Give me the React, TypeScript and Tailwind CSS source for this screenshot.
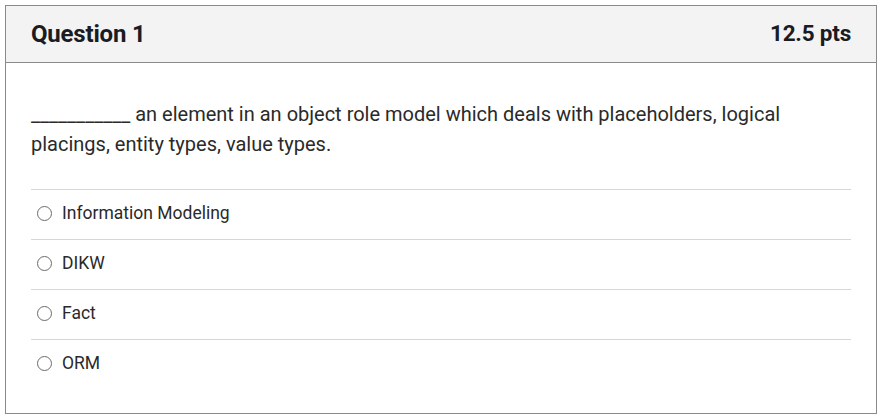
const options = ["Information Modeling", "DIKW", "Fact", "ORM"];

export default function App() {
  return (
    <div className="bg-white pl-[5px] pr-[4px] pt-[5px] pb-[4px] font-['Roboto',sans-serif] text-[#1f1f1f]">
      <div className="border border-[#8a8a8a]">
        <div className="flex h-[57px] items-center justify-between border-b border-[#8a8a8a] bg-[#f3f3f3] pl-[25px] pr-[25px]">
          <h2 className="text-[24px] font-bold tracking-[-0.2px] text-[#1b1b24]">Question 1</h2>
          <span className="text-[22.5px] font-bold tracking-[-0.2px] text-[#1b1b24]">12.5 pts</span>
        </div>
        <div className="px-[25px] pt-[36px] pb-[24px]">
          <p className="text-[20px] leading-[30px] text-[#2a2a2a]">
            ___________ an element in an object role model which deals with placeholders, logical placings, entity
            types, value types.
          </p>
          <div className="mt-[30px]">
            {options.map((o) => (
              <label key={o} className="flex h-[50px] items-center border-t border-[#d6d6d6] pb-[2px] text-[17.5px] text-[#2a2a2a]">
                <span className="ml-[6px] mr-[10px] h-[15px] w-[15px] rounded-full border border-[#6b6b6b] bg-white" />
                {o}
              </label>
            ))}
          </div>
        </div>
      </div>
    </div>
  );
}
